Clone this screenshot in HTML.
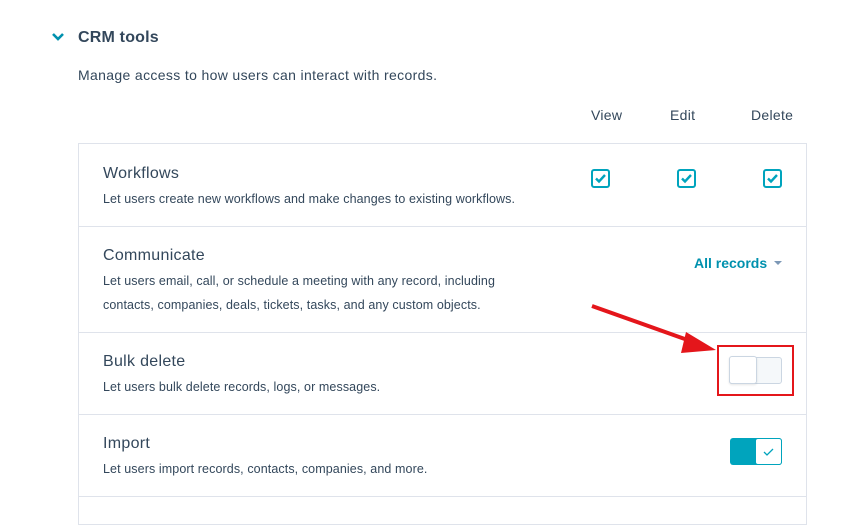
<!DOCTYPE html>
<html><head><style>
body{margin:0;width:842px;height:511px;background:#fff;font-family:"Liberation Sans",sans-serif;color:#33475b;position:relative;overflow:hidden}
.a{position:absolute;white-space:nowrap}
.t{font-size:16px;letter-spacing:0.3px}
.d{font-size:12.5px;letter-spacing:0.1px}
.cb{position:absolute;width:15px;height:15px;border:2px solid #00a4bd;border-radius:3px}
.line{position:absolute;left:79px;width:727px;height:1px;background:#dfe3eb}
</style></head><body>
<svg class="a" style="left:51px;top:32px" width="14" height="10"><path d="M2 2 L7 7 L12 2" stroke="#0091ae" stroke-width="2.6" fill="none"/></svg>
<div class="a" style="left:78px;top:29px;font-size:16px;font-weight:bold;letter-spacing:0.2px">CRM tools</div>
<div class="a" style="left:78px;top:67px;font-size:14px;letter-spacing:0.35px">Manage access to how users can interact with records.</div>
<div class="a" style="left:591px;top:107px;font-size:14px;letter-spacing:0.3px">View</div>
<div class="a" style="left:670px;top:107px;font-size:14px;letter-spacing:0.3px">Edit</div>
<div class="a" style="left:751px;top:107px;font-size:14px;letter-spacing:0.3px">Delete</div>
<div class="a" style="left:78px;top:143px;width:727px;height:380px;border:1px solid #dfe3eb"></div>
<div class="line" style="top:226px"></div>
<div class="line" style="top:332px"></div>
<div class="line" style="top:414px"></div>
<div class="line" style="top:496px"></div>
<div class="a t" style="left:103px;top:165px">Workflows</div>
<div class="a d" style="left:103px;top:192px">Let users create new workflows and make changes to existing workflows.</div>
<div class="cb" style="left:591px;top:169px"><svg width="15" height="15"><path d="M3 7.5 L6 10.5 L12 4" stroke="#00a4bd" stroke-width="2.4" fill="none"/></svg></div>
<div class="cb" style="left:677px;top:169px"><svg width="15" height="15"><path d="M3 7.5 L6 10.5 L12 4" stroke="#00a4bd" stroke-width="2.4" fill="none"/></svg></div>
<div class="cb" style="left:763px;top:169px"><svg width="15" height="15"><path d="M3 7.5 L6 10.5 L12 4" stroke="#00a4bd" stroke-width="2.4" fill="none"/></svg></div>
<div class="a t" style="left:103px;top:247px">Communicate</div>
<div class="a d" style="left:103px;top:274px">Let users email, call, or schedule a meeting with any record, including</div>
<div class="a d" style="left:103px;top:298px">contacts, companies, deals, tickets, tasks, and any custom objects.</div>
<div class="a" style="left:694px;top:255px;font-size:14px;font-weight:bold;color:#0091ae">All records</div>
<svg class="a" style="left:774px;top:261px" width="8" height="5"><path d="M0 0 L8 0 L4 4Z" fill="#7c98b6"/></svg>
<div class="a t" style="left:103px;top:353px">Bulk delete</div>
<div class="a d" style="left:103px;top:380px">Let users bulk delete records, logs, or messages.</div>
<div class="a" style="left:729px;top:357px;width:51px;height:25px;background:#f5f8fa;border:1px solid #cbd6e2;border-radius:3px"></div>
<div class="a" style="left:729px;top:356px;width:26px;height:26px;background:#fff;border:1px solid #cbd6e2;border-radius:3px;box-shadow:0 1px 2px rgba(0,0,0,.1)"></div>
<div class="a" style="left:717px;top:345px;width:73px;height:47px;border:2px solid #e4161b"></div>
<svg class="a" style="left:588px;top:298px" width="135" height="60"><path d="M4 8 L108 45" stroke="#e4161b" stroke-width="4"/><path d="M98 34 L128 52 L93 55Z" fill="#e4161b"/></svg>
<div class="a t" style="left:103px;top:435px">Import</div>
<div class="a d" style="left:103px;top:462px">Let users import records, contacts, companies, and more.</div>
<div class="a" style="left:730px;top:438px;width:52px;height:27px;background:#00a4bd;border-radius:3px"></div>
<div class="a" style="left:755px;top:438px;width:25px;height:25px;background:#fff;border:1px solid #00a4bd;border-radius:3px"><svg width="25" height="25"><path d="M8 13 L11 16 L17 10" stroke="#00a4bd" stroke-width="1.3" fill="none"/></svg></div>
</body></html>
